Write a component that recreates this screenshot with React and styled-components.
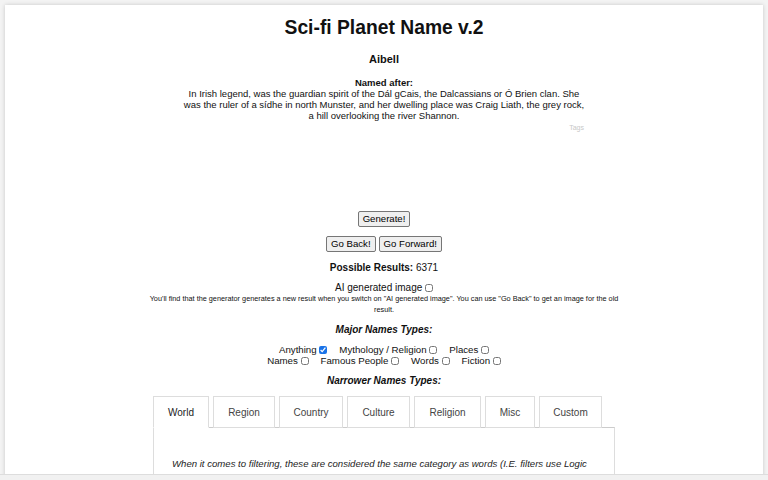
import React from 'react'
import styled, { createGlobalStyle } from 'styled-components'

const Global = createGlobalStyle`
  html, body {
    margin: 0;
    padding: 0;
    background: #f3f3f3;
    font-family: "Liberation Sans", Arial, sans-serif;
    color: #111;
  }
`

const Card = styled.div`
  margin: 5px 5px 0;
  background: #fff;
  box-shadow: 0 0 4px rgba(0, 0, 0, 0.18);
  min-height: 520px;
  padding-top: 13px;
  text-align: center;
`

const Title = styled.h1`
  margin: 0;
  font-size: 19.3px;
  line-height: 20px;
  font-weight: bold;
`

const Name = styled.h2`
  margin: 15px 0 0;
  font-size: 11px;
  line-height: 12px;
  font-weight: bold;
`

const Named = styled.div`
  margin: 12px auto 0;
  width: 404px;
  font-size: 9.5px;
  line-height: 11px;
`

const Label = styled.b`
  display: block;
`

const Tags = styled.div`
  width: 400px;
  margin: 3px auto 0;
  text-align: right;
  font-size: 7px;
  color: #c8c8c8;
`

const ImageSpace = styled.div`
  height: 80px;
`

const Row = styled.div`
  display: flex;
  justify-content: center;
  gap: 3px;
  margin-top: ${p => p.$top || 0}px;
`

const Button = styled.button`
  font-family: "Liberation Sans", Arial, sans-serif;
  font-size: 9.6px;
  line-height: 12px;
  padding: 1px 4px;
  color: #000;
  background: #efefef;
  border: 1px solid #767676;
  border-radius: 2px;
`

const Line = styled.div`
  margin-top: ${p => p.$top || 0}px;
  font-size: ${p => p.$size || 10}px;
  line-height: ${p => p.$lh || 11}px;
  font-style: ${p => (p.$italic ? 'italic' : 'normal')};
  font-weight: ${p => (p.$bold ? 'bold' : 'normal')};
`

const Note = styled.div`
  width: 472px;
  margin: 0 auto;
  font-size: 7.3px;
  line-height: 11px;
`

const Box = styled.input.attrs({ type: 'checkbox' })`
  width: 8px;
  height: 8px;
  margin: 0;
  vertical-align: -1px;
  accent-color: #1a73e8;
`

const Opts = styled.div`
  margin-top: 9px;
  font-size: 9.7px;
  line-height: 11px;
`

const Opt = styled.label`
  margin: 0 6px;
`

const Tabs = styled.div`
  width: 462px;
  margin: 10px auto 0;
  text-align: left;
`

const TabBar = styled.div`
  display: flex;
  gap: 4px;
`

const Tab = styled.div`
  width: ${p => p.$w}px;
  height: 32px;
  box-sizing: border-box;
  display: flex;
  align-items: center;
  justify-content: center;
  font-size: 10px;
  color: ${p => (p.$active ? '#222' : '#444')};
  border: 1px solid #ddd;
  border-bottom: ${p => (p.$active ? '1px solid #fff' : '1px solid #ddd')};
  margin-bottom: -1px;
  background: #fff;
  position: relative;
`

const Panel = styled.div`
  border: 1px solid #ddd;
  border-top-color: #ccc;
  padding: 29px 18px 20px;
  font-size: 9.6px;
  font-style: italic;
  line-height: 14px;
  color: #222;
`

const Footer = styled.div`
  position: fixed;
  left: 0;
  right: 0;
  bottom: 0;
  height: 5px;
  background: #f1f1f1;
  border-top: 1px solid #ddd;
`

const tabs = [
  ['World', 56],
  ['Region', 62],
  ['Country', 64],
  ['Culture', 63],
  ['Religion', 67],
  ['Misc', 50],
  ['Custom', 63],
]

export default function App() {
  return (
    <>
      <Global />
      <Card>
        <Title>Sci-fi Planet Name v.2</Title>
        <Name>Aibell</Name>
        <Named>
          <Label>Named after:</Label>
          In Irish legend, was the guardian spirit of the Dál gCais, the Dalcassians or Ó Brien clan. She
          was the ruler of a sídhe in north Munster, and her dwelling place was Craig Liath, the grey rock,
          a hill overlooking the river Shannon.
        </Named>
        <Tags>Tags</Tags>
        <ImageSpace />
        <Row $top={0}>
          <Button>Generate!</Button>
        </Row>
        <Row $top={9}>
          <Button>Go Back!</Button>
          <Button>Go Forward!</Button>
        </Row>
        <Line $top={10}>
          <b>Possible Results:</b> 6371
        </Line>
        <Line $top={9}>
          AI generated image <Box />
        </Line>
        <Note>
          You'll find that the generator generates a new result when you switch on "AI generated image". You can use "Go Back" to get an image for the old result.
        </Note>
        <Line $top={9} $bold $italic>Major Names Types:</Line>
        <Opts>
          <Opt>Anything <Box defaultChecked /></Opt>
          <Opt>Mythology / Religion <Box /></Opt>
          <Opt>Places <Box /></Opt>
          <br />
          <Opt>Names <Box /></Opt>
          <Opt>Famous People <Box /></Opt>
          <Opt>Words <Box /></Opt>
          <Opt>Fiction <Box /></Opt>
        </Opts>
        <Line $top={9} $bold $italic>Narrower Names Types:</Line>
        <Tabs>
          <TabBar>
            {tabs.map(([t, w], i) => (
              <Tab key={t} $w={w} $active={i === 0}>{t}</Tab>
            ))}
          </TabBar>
          <Panel>
            When it comes to filtering, these are considered the same category as words (I.E. filters use Logic
            OR between them)
          </Panel>
        </Tabs>
      </Card>
      <Footer />
    </>
  )
}
